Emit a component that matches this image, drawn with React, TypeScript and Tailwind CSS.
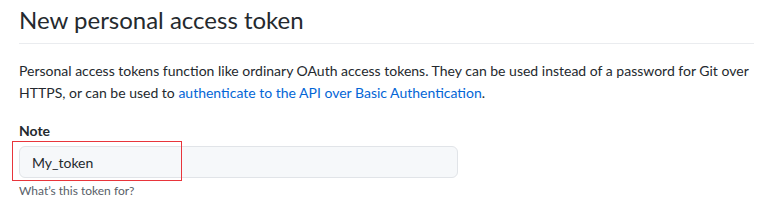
export default function App() {
  return (
    <div className="bg-white pl-[19px] pr-[3px] text-[#24292e] font-['Lato',sans-serif] w-[757px] h-[201px]">
      <div className="pt-[5px] pb-[8px] border-b border-[#eaecef]">
        <h1 className="text-[24px] leading-[30px] font-normal">New personal access token</h1>
      </div>
      <p className="mt-[16px] text-[14px] leading-[22px]">
        Personal access tokens function like ordinary OAuth access tokens. They can be used instead of a password for Git over
        HTTPS, or can be used to{" "}
        <a className="text-[#0366d6]" href="#">authenticate to the API over Basic Authentication</a>.
      </p>
      <div className="mt-[17px]">
        <label className="block text-[14px] leading-[20px] font-bold">Note</label>
        <div className="relative mt-[5px] w-[439px]">
          <input
            readOnly
            value="My_token"
            className="block w-full h-[32px] rounded-[6px] border border-[#e1e4e8] bg-[#f6f8fa] px-[12px] text-[14px] text-[#24292e] outline-none"
          />
          <div className="absolute left-[-7px] top-[-5px] w-[170px] h-[40px] border border-[#e8353b] pointer-events-none" />
        </div>
        <p className="mt-[5px] text-[12px] leading-[16px] text-[#586069]">What’s this token for?</p>
      </div>
    </div>
  );
}
